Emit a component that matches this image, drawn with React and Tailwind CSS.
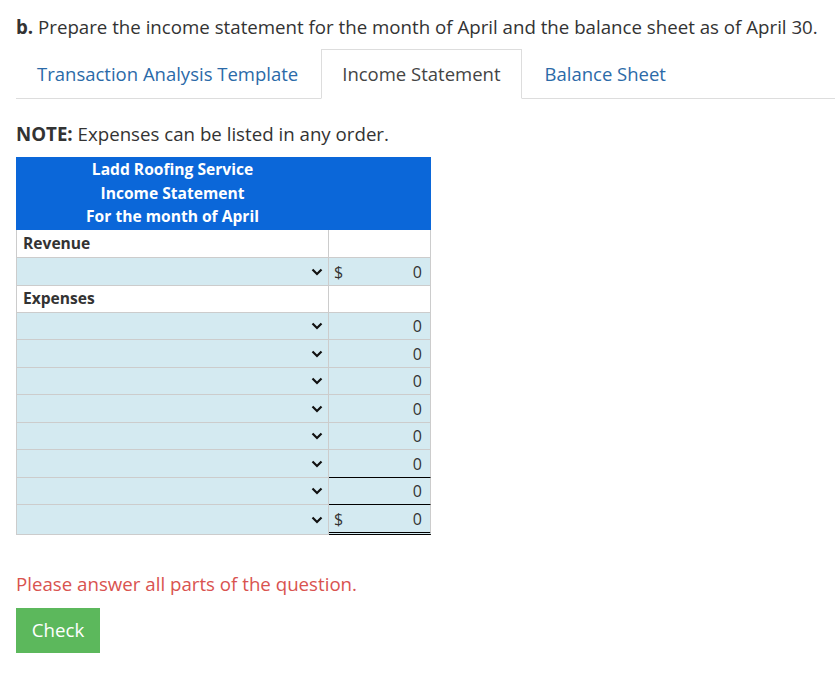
import React from "react";

function Chevron() {
  return (
    <svg width="12" height="8" viewBox="0 0 12 8" className="block">
      <path d="M1.5 1.5 L6 6 L10.5 1.5" fill="none" stroke="#111" strokeWidth="2.2" />
    </svg>
  );
}

function LabelRow({ label, h }) {
  return (
    <div className={"flex " + h}>
      <div className="w-[313px] border-l border-r border-b border-[#cccccc] bg-white pl-[6px] flex items-center font-bold text-[15.6px] text-[#333]">
        {label}
      </div>
      <div className="w-[102px] border-r border-b border-[#cccccc] bg-white" />
    </div>
  );
}

function ValueRow({ dollar, valueBorder, h }) {
  return (
    <div className={"flex " + h}>
      <div className="w-[313px] border-l border-r border-b border-[#cccccc] bg-[#d4eaf1] flex items-center justify-end pr-[5px]">
        <Chevron />
      </div>
      <div
        className={
          "w-[102px] border-r border-[#cccccc] bg-[#d4eaf1] flex items-center justify-between pl-[5px] pr-[8px] text-[16px] text-[#333] " +
          valueBorder
        }
      >
        <span>{dollar ? "$" : ""}</span>
        <span>0</span>
      </div>
    </div>
  );
}

export default function App() {
  const font = { fontFamily: '"Open Sans", "Noto Sans", sans-serif' };
  return (
    <div className="bg-white w-[835px] h-[681px] overflow-hidden text-[#333]" style={font}>
      <div className="pl-[16px] pt-[13px] text-[18.7px] leading-[27px] whitespace-nowrap">
        <span className="font-bold">b.</span> Prepare the income statement for the month of April and the balance sheet as of April 30.
      </div>
      <div className="ml-[16px] mt-[9px] flex border-b border-[#dddddd] text-[18.5px]">
        <div className="-mb-px mr-[2px] h-[49px] px-[20px] border border-transparent flex items-center text-[#2b6aa8]">
          Transaction Analysis Template
        </div>
        <div className="-mb-px mr-[2px] h-[50px] px-[20px] border border-[#dddddd] border-b-white bg-white flex items-center text-[#444]">
          Income Statement
        </div>
        <div className="-mb-px mr-[2px] h-[49px] px-[20px] border border-transparent flex items-center text-[#2b6aa8]">
          Balance Sheet
        </div>
      </div>
      <div className="pl-[16px] mt-[21px] text-[18.7px] leading-[27px]">
        <span className="font-bold">NOTE:</span> Expenses can be listed in any order.
      </div>
      <div className="ml-[16px] mt-[10px] w-[415px]">
        <div className="h-[73px] pt-[1px] bg-[#0b67d9] flex">
          <div className="w-[313px] flex flex-col items-center text-white font-bold text-[15.6px] leading-[23.5px]">
            <div>Ladd Roofing Service</div>
            <div>Income Statement</div>
            <div>For the month of April</div>
          </div>
        </div>
        <LabelRow label="Revenue" h="h-[28px]" />
        <ValueRow dollar valueBorder="border-b" h="h-[28px]" />
        <LabelRow label="Expenses" h="h-[27px]" />
        <ValueRow valueBorder="border-b" h="h-[27px]" />
        <ValueRow valueBorder="border-b" h="h-[28px]" />
        <ValueRow valueBorder="border-b" h="h-[27px]" />
        <ValueRow valueBorder="border-b" h="h-[28px]" />
        <ValueRow valueBorder="border-b" h="h-[27px]" />
        <ValueRow valueBorder="border-b border-b-black" h="h-[28px]" />
        <ValueRow valueBorder="border-b border-b-black" h="h-[27px]" />
        <ValueRow dollar valueBorder="border-b-[3px] border-double border-b-black" h="h-[30px]" />
      </div>
      <div className="pl-[16px] mt-[35px] text-[18.7px] leading-[27px] text-[#d9534f]">
        Please answer all parts of the question.
      </div>
      <div className="ml-[16px] mt-[11px] w-[84px] h-[45px] bg-[#5cb85c] text-white text-[18.7px] flex items-center justify-center">
        Check
      </div>
    </div>
  );
}
